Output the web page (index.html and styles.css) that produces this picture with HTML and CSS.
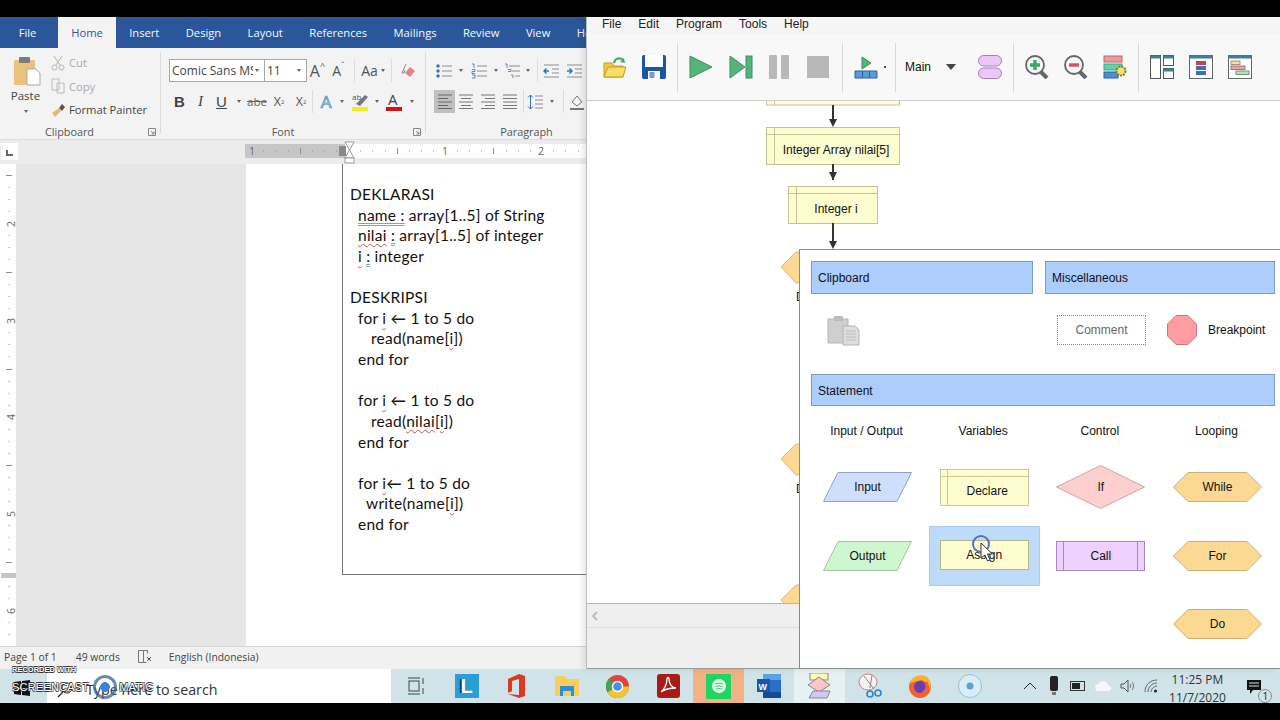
FILE: index.html
```html
<!DOCTYPE html>
<html lang="en">
<head>
<meta charset="utf-8">
<title>Word and Flowgorithm</title>
<link rel="stylesheet" href="styles.css">
</head>
<body>
<div class="screen">
  <div class="desktop">
    <section class="word">
      <nav class="tabs">
        <span class="tab tab-file">File</span>
        <span class="tab tab-active">Home</span>
        <span class="tab">Insert</span>
        <span class="tab">Design</span>
        <span class="tab">Layout</span>
        <span class="tab">References</span>
        <span class="tab">Mailings</span>
        <span class="tab">Review</span>
        <span class="tab">View</span>
        <span class="tab">Help</span>
      </nav>
      <div class="ribbon">
        <div class="group group-clip">
          <div class="clip-body">
            <div class="paste">
              <svg class="paste-icon" width="27" height="30" viewBox="0 0 27 30"><rect x="0" y="4" width="21" height="25" rx="1.5" fill="#e7c37d"/><rect x="5" y="1" width="11" height="6" rx="1" fill="#7b7b7b"/><path d="M13 13h9l4 4v12H13z" fill="#fff" stroke="#a9a9a9"/></svg>
              <span class="paste-label">Paste</span>
              <i class="caret"></i>
            </div>
            <div class="clip-list">
              <div class="clip-item dim"><svg width="14" height="16" viewBox="0 0 14 16"><path d="M3 1l6 9M11 1L5 10" stroke="#b5b5b5" fill="none"/><circle cx="3.5" cy="12.5" r="2.5" fill="none" stroke="#b5b5b5"/><circle cx="10.5" cy="12.5" r="2.5" fill="none" stroke="#b5b5b5"/></svg><span>Cut</span></div>
              <div class="clip-item dim"><svg width="14" height="16" viewBox="0 0 14 16"><path d="M1 1h7v11H1zM6 5h7v10H6z" fill="#f3f3f3" stroke="#bcbcbc"/></svg><span>Copy</span></div>
              <div class="clip-item"><svg width="14" height="16" viewBox="0 0 14 16"><path d="M8 6l-7 5 3 4 6-6z" fill="#e6b877"/><path d="M8 6l3 3 3-4-3-3z" fill="#555"/></svg><span>Format Painter</span></div>
            </div>
          </div>
          <div class="glabel"><span class="glabel-text glabel-clip">Clipboard</span><svg class="launcher" width="8" height="8" viewBox="0 0 8 8"><path d="M.5 7.500v-7h7v7zM3 3l3 3M6 3.500V6H3.500" fill="none" stroke="#888"/></svg></div>
        </div>
        <i class="rsep"></i>
        <div class="group group-font">
          <div class="rrow">
            <div class="selectbox font-name"><span class="font-name-text">Comic Sans MS</span><i class="caret"></i></div>
            <div class="selectbox font-size"><span>11</span><i class="caret"></i></div>
            <span class="tool w21 big">A<sup>^</sup></span>
            <span class="tool w21 mid">A<sup>ˇ</sup></span>
            <i class="vline ml5"></i>
            <span class="tool w36 aa">Aa<i class="caret"></i></span>
            <i class="vline"></i>
            <span class="tool w32"><svg width="14" height="16" viewBox="0 0 14 16"><path d="M5 1L1 10h2l1-3" fill="none" stroke="#8a8a8a"/><path d="M4 10l5-6 5 4-5 6z" fill="#ea7f8b"/></svg></span>
          </div>
          <div class="rrow">
            <span class="tool w21 fmt b">B</span>
            <span class="tool w21 fmt it">I</span>
            <span class="tool w21 fmt un">U</span>
            <span class="tool w14"><i class="caret"></i></span>
            <span class="tool w22 strike">abe</span>
            <span class="tool w22 sc">X<sub>2</sub></span>
            <span class="tool w22 sc">X<sup>2</sup></span>
            <i class="vline"></i>
            <span class="tool w26 glow">A</span>
            <span class="tool w6"><i class="caret"></i></span>
            <span class="tool w30"><svg width="17" height="20" viewBox="0 0 17 20"><path d="M4 12L13 3l3 2-8 9z" fill="#777"/><text x="0" y="8" class="mini">ab</text><rect y="15" width="16" height="4" fill="#f5ee1f"/></svg></span>
            <span class="tool w4"><i class="caret"></i></span>
            <span class="tool w30"><svg width="17" height="20" viewBox="0 0 17 20"><text x="2" y="13" class="mini-a">A</text><rect y="15" width="16" height="4" fill="#d01414"/></svg></span>
            <span class="tool w6"><i class="caret"></i></span>
          </div>
          <div class="glabel glabel-font"><span class="glabel-text">Font</span><svg class="launcher" width="8" height="8" viewBox="0 0 8 8"><path d="M.5 7.500v-7h7v7zM3 3l3 3M6 3.500V6H3.500" fill="none" stroke="#888"/></svg></div>
        </div>
        <i class="rsep"></i>
        <div class="group group-para">
          <div class="rrow">
            <span class="tool w20"><svg width="16" height="16" viewBox="0 0 16 16"><path d="M6 3h10M6 8h10M6 13h10" stroke="#8c8c8c"/><circle cx="2" cy="3" r="1.700" fill="#3f6fb0"/><circle cx="2" cy="8" r="1.700" fill="#3f6fb0"/><circle cx="2" cy="13" r="1.700" fill="#3f6fb0"/></svg></span>
            <span class="tool w14"><i class="caret"></i></span>
            <span class="tool w22"><svg width="16" height="16" viewBox="0 0 16 16"><path d="M6 3h10M6 8h10M6 13h10" stroke="#8c8c8c"/><path d="M1 1h2v4M1 6.500h3v2H1v2h3M1 12h3v3H1" fill="none" stroke="#3f6fb0" stroke-width=".8"/></svg></span>
            <span class="tool w12"><i class="caret"></i></span>
            <span class="tool w20"><svg width="16" height="16" viewBox="0 0 16 16"><path d="M5 3h11M8 8h8M11 13h5" stroke="#8c8c8c"/><path d="M1 1h2v4M4 6.500h3v2H4M7 12h2v3" fill="none" stroke="#3f6fb0" stroke-width=".8"/></svg></span>
            <span class="tool w12"><i class="caret"></i></span>
            <i class="vline ml3"></i>
            <span class="tool w26"><svg width="16" height="14" viewBox="0 0 16 14"><path d="M1 1h15M9 5h7M9 9h7M1 13h15" stroke="#8c8c8c"/><path d="M6 7H1m2.500-2.500L1 7l2.500 2.500" fill="none" stroke="#2f76bd" stroke-width="1.500"/></svg></span>
            <span class="tool w20"><svg width="16" height="14" viewBox="0 0 16 14"><path d="M1 1h15M9 5h7M9 9h7M1 13h15" stroke="#8c8c8c"/><path d="M1 7h5M3.500 4.500L6 7 3.500 9.500" fill="none" stroke="#2f76bd" stroke-width="1.500"/></svg></span>
          </div>
          <div class="rrow">
            <span class="tool w21 tool-on"><svg width="14" height="15" viewBox="0 0 14 15"><path d="M0 1h14M0 4.500h10M0 8h14M0 11.500h10M0 14.500h14" stroke="#666"/></svg></span>
            <span class="tool w22"><svg width="14" height="15" viewBox="0 0 14 15"><path d="M0 1h14M2 4.500h10M0 8h14M2 11.500h10M0 14.500h14" stroke="#777"/></svg></span>
            <span class="tool w22"><svg width="14" height="15" viewBox="0 0 14 15"><path d="M0 1h14M4 4.500h10M0 8h14M4 11.500h10M0 14.500h14" stroke="#777"/></svg></span>
            <span class="tool w21"><svg width="14" height="15" viewBox="0 0 14 15"><path d="M0 1h14M0 4.500h14M0 8h14M0 11.500h14M0 14.500h14" stroke="#777"/></svg></span>
            <i class="vline ml3"></i>
            <span class="tool w22"><svg width="16" height="16" viewBox="0 0 16 16"><path d="M8 2h8M8 6h8M8 10h8M8 14h8" stroke="#8c8c8c"/><path d="M3.500 1v14M1 3.500L3.500 1 6 3.500M1 12.500L3.500 15 6 12.500" fill="none" stroke="#2f76bd"/></svg></span>
            <span class="tool w12"><i class="caret"></i></span>
            <i class="vline ml5"></i>
            <span class="tool w26"><svg width="16" height="16" viewBox="0 0 16 16"><path d="M3 8l5-6 5 6-5 4z" fill="#f4f4f4" stroke="#777"/><path d="M1 15h14" stroke="#777" stroke-width="2"/></svg></span>
          </div>
          <div class="glabel"><span class="glabel-text">Paragraph</span></div>
        </div>
      </div>
      <div class="workspace">
        <div class="ruler-row">
          <div class="corner"><i class="corner-mark"></i></div>
          <svg class="hruler" width="342" height="24" viewBox="244 140 342 24">
            <rect x="245" y="144" width="100" height="14" fill="#c6c6c6"/>
            <rect x="345" y="144" width="241" height="14" fill="#fff"/>
            <path class="ticks" d="M263 151h1M275 151h1M288 151h1M312 151h1M324 151h1M336 151h1M360 151h1M372 151h1M385 151h1M409 151h1M421 151h1M433 151h1M457 151h1M469 151h1M481 151h1M506 151h1M518 151h1M530 151h1M553 151h1M565 151h1M578 151h1"/>
            <path class="ticks" d="M300.500 148v6M397.500 148v6M493.500 148v6"/>
            <text class="rnum" x="249" y="155">1</text>
            <text class="rnum" x="442" y="155">1</text>
            <text class="rnum" x="538" y="155">2</text>
            <rect x="339" y="146" width="7" height="10" fill="#8a8a8a"/>
            <path d="M345 142h9l-4.500 8zM345 158l4.500-8 4.500 8z" fill="#fff" stroke="#9a9a9a"/>
            <rect x="345" y="158" width="9" height="5" fill="#fff" stroke="#9a9a9a"/>
          </svg>
        </div>
        <div class="doc-row">
          <svg class="vruler" width="16" height="482" viewBox="0 164 16 482">
            <path class="ticks" d="M9 187v1M9 199v1M9 211v1M9 235v1M9 247v1M9 259v1M9 284v1M9 296v1M9 308v1M9 332v1M9 344v1M9 356v1M9 381v1M9 393v1M9 405v1M9 429v1M9 441v1M9 453v1M9 477v1M9 489v1M9 501v1M9 525v1M9 537v1M9 549v1M9 586v1M9 598v1M9 622v1M9 634v1"/>
            <path class="ticks" d="M6 175.500h6M6 272.500h6M6 369.500h6M6 465.500h6M6 562.500h6"/>
            <rect x="1" y="573" width="15" height="5" fill="#c6c6c6"/>
            <text class="rnum" transform="rotate(-90 12 223)" x="8" y="226">2</text>
            <text class="rnum" transform="rotate(-90 12 320)" x="8" y="323">3</text>
            <text class="rnum" transform="rotate(-90 12 416)" x="8" y="419">4</text>
            <text class="rnum" transform="rotate(-90 12 513)" x="8" y="516">5</text>
            <text class="rnum" transform="rotate(-90 12 610)" x="8" y="613">6</text>
          </svg>
          <div class="gutter"></div>
          <div class="page">
            <div class="textbox">
              <p>DEKLARASI</p>
              <p class="i1"><span class="gr">name :</span> array[1..5] of String</p>
              <p class="i1"><span class="sp">nilai</span> <span class="gr">:</span> array[1..5] of integer</p>
              <p class="i1"><span class="sp">i</span> <span class="gr">:</span> integer</p>
              <p>&nbsp;</p>
              <p>DESKRIPSI</p>
              <p class="i1">for <span class="sp">i</span> ← 1 to 5 do</p>
              <p class="i2">read(name[<span class="sp">i</span>])</p>
              <p class="i1">end for</p>
              <p>&nbsp;</p>
              <p class="i1">for <span class="sp">i</span> ← 1 to 5 do</p>
              <p class="i2">read(<span class="sp">nilai</span>[<span class="sp">i</span>])</p>
              <p class="i1">end for</p>
              <p>&nbsp;</p>
              <p class="i1">for <span class="sp">i</span>← 1 to 5 do</p>
              <p class="i3">write(name[<span class="sp">i</span>])</p>
              <p class="i1">end for</p>
            </div>
          </div>
        </div>
      </div>
      <footer class="status">
        <span class="st-page">Page 1 of 1</span>
        <span class="st-words">49 words</span>
        <svg class="st-icon" width="14" height="14" viewBox="0 0 14 14"><path d="M.5.5h5v12h-5zM5.500.5h4v3M5.500 12.500h3" fill="none" stroke="#777"/><path d="M9 7l4 4M13 7l-4 4" stroke="#555"/></svg>
        <span class="st-lang">English (Indonesia)</span>
      </footer>
    </section>

    <section class="flow">
      <nav class="menu">
        <span>File</span><span>Edit</span><span>Program</span><span>Tools</span><span>Help</span>
      </nav>
      <div class="toolbar">
        <svg class="ti" width="24" height="24" viewBox="0 0 24 24"><path d="M1 8h8l2 3h9v11H1z" fill="#f5c93f" stroke="#c79c1e"/><path d="M1 22l4-10h18l-3 10z" fill="#fbdc68" stroke="#c79c1e"/><path d="M11 8c1-5 6-6 9-3" fill="none" stroke="#4aa76b" stroke-width="2.200"/><path d="M22 8l-5-1 4-4z" fill="#4aa76b"/></svg>
        <svg class="ti ml15" width="24" height="24" viewBox="0 0 24 24"><path d="M2 0h20a2 2 0 012 2v20a2 2 0 01-2 2H2a2 2 0 01-2-2V2a2 2 0 012-2z" fill="#1d55a3"/><rect x="3" y="0" width="18" height="12" fill="#fff"/><rect x="6" y="16" width="12" height="8" fill="#fff"/><rect x="7.500" y="17" width="5" height="6" fill="#7c9ac5"/></svg>
        <i class="sep"></i>
        <svg class="ti" width="24" height="24" viewBox="0 0 24 24"><path d="M1 1l22 11L1 23z" fill="#55b47c" stroke="#3f8f60"/></svg>
        <svg class="ti ml16" width="24" height="24" viewBox="0 0 24 24"><path d="M1 1l15 11L1 23z" fill="#55b47c" stroke="#3f8f60"/><rect x="17" y="1" width="6" height="22" fill="#55b47c" stroke="#3f8f60"/></svg>
        <svg class="ti ml16" width="24" height="24" viewBox="0 0 24 24"><rect x="0" y="0" width="8" height="24" rx="1" fill="#b8b8b8"/><rect x="12" y="0" width="8" height="24" rx="1" fill="#b8b8b8"/></svg>
        <svg class="ti ml13" width="24" height="24" viewBox="0 0 24 24"><rect x="1" y="1" width="22" height="22" fill="#b8b8b8"/></svg>
        <i class="sep sep-tight"></i>
        <svg class="ti" width="24" height="24" viewBox="0 0 24 24"><path d="M8 2l9 6-9 6z" fill="#55b47c" stroke="#3f8f60"/><path d="M1 16h22v7H1z" fill="#5b9bd8" stroke="#2c639b"/><path d="M8.500 16v7M15.500 16v7" stroke="#2c639b"/></svg>
        <i class="dot"></i>
        <i class="sep sep-main"></i>
        <span class="main-label">Main</span>
        <i class="main-tri"></i>
        <svg class="ti ml22" width="24" height="24" viewBox="0 0 24 24"><rect x=".5" y=".5" width="23" height="10.500" rx="5.200" fill="#ecc6f7" stroke="#a382af"/><rect x=".5" y="13" width="23" height="10.500" rx="5.200" fill="#ecc6f7" stroke="#a382af"/></svg>
        <i class="sep"></i>
        <svg class="ti" width="24" height="24" viewBox="0 0 24 24"><path d="M15 16l7 7" stroke="#666" stroke-width="4"/><circle cx="10" cy="10" r="9" fill="#f7f7f7" stroke="#666" stroke-width="1.800"/><path d="M10 5v10M5 10h10" stroke="#3fa66a" stroke-width="3.400"/></svg>
        <svg class="ti ml15" width="24" height="24" viewBox="0 0 24 24"><path d="M15 16l7 7" stroke="#666" stroke-width="4"/><circle cx="10" cy="10" r="9" fill="#f7f7f7" stroke="#666" stroke-width="1.800"/><path d="M5 10h10" stroke="#d8505a" stroke-width="3.400"/></svg>
        <svg class="ti ml15" width="24" height="24" viewBox="0 0 24 24"><rect x="1" y="1" width="18" height="6" fill="#ec9a9e" stroke="#b66"/><rect x="1" y="9" width="18" height="6" fill="#66d49a" stroke="#3a9"/><rect x="1" y="17" width="14" height="6" fill="#4a90d8" stroke="#2c639b"/><circle cx="18" cy="16" r="4.500" fill="#f5e07a" stroke="#8a7a30" stroke-width="2" stroke-dasharray="2 1"/></svg>
        <i class="sep"></i>
        <svg class="ti" width="24" height="24" viewBox="0 0 24 24"><rect x=".5" y=".5" width="10" height="23" fill="#fff" stroke="#555"/><rect x=".5" y=".5" width="10" height="3" fill="#3d7f9c"/><rect x="13.500" y=".5" width="10" height="10" fill="#fff" stroke="#555"/><rect x="13.500" y="13.500" width="10" height="10" fill="#fff" stroke="#555"/><rect x="13.500" y=".5" width="10" height="3" fill="#3d7f9c"/><rect x="13.500" y="13.500" width="10" height="3" fill="#3d7f9c"/></svg>
        <svg class="ti ml15" width="24" height="24" viewBox="0 0 24 24"><rect x=".5" y=".5" width="23" height="23" fill="#fff" stroke="#666"/><rect x=".5" y=".5" width="23" height="3" fill="#3d7f9c"/><rect x="7" y="6" width="10" height="4" fill="#c8404c"/><rect x="7" y="11" width="10" height="4" fill="#3a6fb8"/><rect x="7" y="16" width="10" height="4" fill="#3a6fb8"/></svg>
        <svg class="ti ml15" width="24" height="24" viewBox="0 0 24 24"><rect x=".5" y=".5" width="23" height="23" fill="#fff" stroke="#666"/><rect x=".5" y=".5" width="23" height="3" fill="#3d7f9c"/><rect x="3" y="6" width="9" height="3.500" fill="#f3e48a" stroke="#998"/><rect x="3" y="11" width="14" height="3.500" fill="#ef9ea5" stroke="#a77"/><rect x="8" y="16" width="13" height="3.500" fill="#a8e6b8" stroke="#797"/></svg>
      </div>
      <div class="canvas">
        <svg class="chart" width="693" height="502" viewBox="587 101 693 502">
          <g class="decl">
            <rect x="766.500" y="90" width="133" height="15"/>
            <path d="M774.500 90v15"/>
            <rect x="766.500" y="127.500" width="133" height="37"/>
            <path d="M774.500 127.500v37M766.500 134.500h133"/>
            <rect x="788.500" y="186.500" width="89" height="37"/>
            <path d="M796.500 186.500v37M788.500 193.500h89"/>
          </g>
          <text class="ntext" x="836" y="154" text-anchor="middle">Integer Array nilai[5]</text>
          <text class="ntext" x="836" y="213" text-anchor="middle">Integer i</text>
          <path class="flowline" d="M833 105v16M833 164v16M833 223v23"/>
          <path class="arrowhead" d="M829 119h8l-4 8zM829 172h8l-4 8zM829 241h8l-4 8z"/>
          <path class="hex" d="M800 252h-4l-15 15 15 16h4zM800 444h-4l-15 15 15 16h4zM800 585h-4l-15 15 15 16h4z"/>
          <text class="ntext" x="796" y="301">D</text>
          <text class="ntext" x="796" y="493">D</text>
        </svg>
      </div>
      <div class="hscroll"><svg width="8" height="10" viewBox="0 0 8 10"><path d="M6 1L2 5l4 4" fill="none" stroke="#bbb" stroke-width="1.800"/></svg></div>
      <div class="flow-foot"></div>

      <aside class="palette">
        <div class="pal-top">
          <div class="pal-col pal-col-a">
            <h3 class="pal-head">Clipboard</h3>
            <div class="pal-items">
              <svg class="pal-clip" width="33" height="31" viewBox="0 0 33 31"><path d="M1 4h20v24H1z" fill="#cfcfcf" stroke="#b5b5b5"/><rect x="7" y="1" width="9" height="5" fill="#bbb"/><path d="M16 11h12l4 4v15H16z" fill="#ddd" stroke="#b5b5b5"/><path d="M19 16h10M19 19h10M19 22h10M19 25h10" stroke="#bdbdbd"/></svg>
            </div>
          </div>
          <div class="pal-col pal-col-b">
            <h3 class="pal-head">Miscellaneous</h3>
            <div class="pal-items">
              <span class="comment">Comment</span>
              <svg class="octagon" width="30" height="30" viewBox="0 0 30 30"><path d="M9 .5h12L29.500 9v12L21 29.500H9L.5 21V9z" fill="#fd9da2" stroke="#c97b80"/></svg>
              <span class="bp-label">Breakpoint</span>
            </div>
          </div>
        </div>
        <h3 class="pal-head pal-head-wide">Statement</h3>
        <div class="pal-titles">
          <span>Input / Output</span><span>Variables</span><span>Control</span><span>Looping</span>
        </div>
        <div class="pal-grid">
          <div class="cell"><div class="shape"><svg width="89" height="30" viewBox="0 0 89 30"><path d="M15 .5h73.500L74 29.500H.5z" fill="#cfdffb" stroke="#8ea3c8"/></svg><span>Input</span></div></div>
          <div class="cell"><div class="shape shape-decl"><svg width="89" height="37" viewBox="0 0 89 37"><rect x=".5" y=".5" width="88" height="36" fill="#fdfdcf" stroke="#c9c99a"/><path d="M7.500 .5v36M.5 7.500h88" stroke="#c9c99a" fill="none"/></svg><span>Declare</span></div></div>
          <div class="cell"><div class="shape"><svg width="89" height="44" viewBox="0 0 89 44"><path d="M44.500 .5l44 21.500-44 21.500L.5 22z" fill="#fdcfcf" stroke="#cfa5a5"/></svg><span>If</span></div></div>
          <div class="cell"><div class="shape"><svg width="89" height="30" viewBox="0 0 89 30"><path d="M15 .5h59L88.500 15 74 29.500H15L.5 15z" fill="#fbd993" stroke="#cdb078"/></svg><span>While</span></div></div>

          <div class="cell"><div class="shape"><svg width="89" height="30" viewBox="0 0 89 30"><path d="M15 .5h73.500L74 29.500H.5z" fill="#cff7cf" stroke="#9ec89e"/></svg><span>Output</span></div></div>
          <div class="cell"><div class="selected"><div class="shape"><svg width="89" height="30" viewBox="0 0 89 30"><rect x=".5" y=".5" width="88" height="29" fill="#fdfdcf" stroke="#b5b58a"/></svg><span>Assign</span></div>
            <svg class="pointer" width="28" height="34" viewBox="0 0 28 34"><circle cx="12" cy="11" r="8" fill="none" stroke="#5b6bd0" stroke-width="2"/><path d="M12 10v15l4-3 2.500 6 2.500-1-2.500-6h5z" fill="#fff" stroke="#333"/></svg>
          </div></div>
          <div class="cell"><div class="shape"><svg width="89" height="30" viewBox="0 0 89 30"><rect x=".5" y=".5" width="88" height="29" fill="#efcffd" stroke="#a58bb5"/><path d="M7.500 .5v29M81.500 .5v29" stroke="#a58bb5" fill="none"/></svg><span>Call</span></div></div>
          <div class="cell"><div class="shape"><svg width="89" height="30" viewBox="0 0 89 30"><path d="M15 .5h59L88.500 15 74 29.500H15L.5 15z" fill="#fbd993" stroke="#cdb078"/></svg><span>For</span></div></div>

          <div class="cell"></div><div class="cell"></div><div class="cell"></div>
          <div class="cell"><div class="shape"><svg width="89" height="30" viewBox="0 0 89 30"><path d="M15 .5h59L88.500 15 74 29.500H15L.5 15z" fill="#fbd993" stroke="#cdb078"/></svg><span>Do</span></div></div>
        </div>
      </aside>
    </section>
  </div>

  <div class="taskbar">
    <svg class="win" width="16" height="16" viewBox="0 0 16 16"><path d="M0 2l7-1v7H0zM8 1l8-1v8H8zM0 9h7v6l-7-1zM8 9h8v7l-8-1z" fill="#111"/></svg>
    <div class="search">
      <svg width="16" height="16" viewBox="0 0 16 16"><circle cx="10" cy="6" r="5" fill="none" stroke="#222"/><path d="M6 10l-5 5" stroke="#222" stroke-width="1.300"/></svg>
      <span>Type here to search</span>
    </div>
    <div class="slot"><svg width="18" height="18" viewBox="0 0 18 18"><rect x="2" y="4" width="10" height="10" fill="none" stroke="#444"/><path d="M1 1h12M1 17h12M16 1v6M16 11v6" stroke="#444"/></svg></div>
    <div class="slot"><div class="app-l">L</div></div>
    <div class="slot"><svg width="19" height="24" viewBox="0 0 19 24"><path d="M1 5l11-5 6 2v20l-6 2-11-4 11 1V5l-7 2v10l-4 2z" fill="#d83b20"/></svg></div>
    <div class="slot"><svg width="24" height="20" viewBox="0 0 24 20"><path d="M0 0h10l2 3h12v17H0z" fill="#f6cf5c"/><path d="M5 10h14v10h-3v-5H8v5H5z" fill="#2f8fd8"/></svg></div>
    <div class="slot"><svg width="23" height="23" viewBox="0 0 24 24"><circle cx="12" cy="12" r="12" fill="#e0463a"/><path d="M12 12L1.600 18A12 12 0 013 4z" fill="#3da55a"/><path d="M12 12h12a12 12 0 01-12 12 12 12 0 01-10.400-6z" fill="#f5c52e"/><circle cx="12" cy="12" r="6" fill="#fff"/><circle cx="12" cy="12" r="4.500" fill="#4a8ff0"/></svg></div>
    <div class="slot"><svg width="23" height="24" viewBox="0 0 23 24"><rect width="23" height="24" rx="3" fill="#a81c14"/><path d="M4 18c3-2 6-8 6-13 0-2 2-2 2 0 0 5 3 9 7 9-5 0-11 1-15 4z" fill="none" stroke="#fff" stroke-width="1.300"/></svg></div>
    <div class="slot slot-orange"><div class="app-sp"><svg width="14" height="14" viewBox="0 0 14 14"><circle cx="7" cy="7" r="7" fill="#e8f8ee"/><path d="M3 5c3-1 5-1 8 0M3.500 7.500c2.500-.7 4.500-.7 7 0M4 10c2-.5 4-.5 6 0" stroke="#1ed760" fill="none"/></svg></div></div>
    <div class="slot"><svg width="24" height="24" viewBox="0 0 24 24"><rect x="6" width="18" height="24" rx="1" fill="#2b6ec4"/><rect x="6" width="18" height="6" fill="#55a5e8"/><rect x="6" y="18" width="18" height="6" fill="#134a9a"/><rect y="5" width="13" height="13" fill="#1d56a8"/><text class="app-w" x="1.500" y="15.500">W</text></svg></div>
    <div class="slot slot-light"><svg width="24" height="26" viewBox="0 0 24 26"><rect x="3" y="0" width="18" height="7" fill="#fdfdb0" stroke="#888"/><path d="M12 4l11 8-11 7L1 12z" fill="#fdc5c5" stroke="#888"/><path d="M6 18h17l-3 7H2z" fill="#d6c6f5" stroke="#888"/></svg></div>
    <div class="slot"><svg width="24" height="26" viewBox="0 0 24 26"><ellipse cx="10" cy="9" rx="9" ry="8" fill="#f4f4f4" stroke="#d87a80"/><path d="M6 3l10 13M14 2L12 15" stroke="#888"/><circle cx="12" cy="21" r="3" fill="none" stroke="#2a86c8" stroke-width="1.600"/><circle cx="20" cy="20" r="3" fill="none" stroke="#2a86c8" stroke-width="1.600"/></svg></div>
    <div class="slot"><svg width="24" height="24" viewBox="0 0 24 24"><circle cx="12" cy="13" r="11" fill="#f2622e"/><path d="M2 9C4 2 13-1 19 3c3 2 5 8 3 13-1-5-4-9-9-10z" fill="#fbb02e"/><circle cx="12" cy="13" r="6" fill="#6a3bb8"/><path d="M18 8c2 4 1 9-3 11" fill="none" stroke="#f2622e" stroke-width="3"/></svg></div>
    <div class="slot"><svg width="24" height="24" viewBox="0 0 24 24"><circle cx="12" cy="12" r="11.500" fill="#d9eef7" stroke="#8fc0dc"/><circle cx="12" cy="12" r="3.500" fill="#58a4dc"/></svg></div>
    <div class="tray">
      <span class="tray-i"><svg width="14" height="8" viewBox="0 0 14 8"><path d="M1 7l6-6 6 6" fill="none" stroke="#222"/></svg></span>
      <span class="tray-i"><svg width="10" height="20" viewBox="0 0 10 20"><rect x="1" y="0" width="8" height="15" rx="2" fill="#222"/><rect x="3" y="16" width="4" height="3" fill="#777"/></svg></span>
      <span class="tray-i"><svg width="16" height="10" viewBox="0 0 16 10"><rect x=".5" y=".5" width="14" height="9" fill="none" stroke="#333"/><rect x="2" y="2" width="8" height="6" fill="#222"/></svg></span>
      <span class="tray-i"><svg width="16" height="12" viewBox="0 0 16 12"><path d="M4 11a3.500 3.500 0 01-.5-7 5 5 0 019.500 1 3 3 0 010 6z" fill="#f4f8f8"/></svg></span>
      <span class="tray-i"><svg width="15" height="14" viewBox="0 0 15 14"><path d="M1 5h3l4-4v12L4 9H1z" fill="none" stroke="#555"/><path d="M10 5c1 1 1 3 0 4M12 3c2 2 2 6 0 8" fill="none" stroke="#777"/></svg></span>
      <span class="tray-i"><svg width="14" height="14" viewBox="0 0 14 14"><path d="M1 13C1 6 6 1 13 1M4 13c0-5 4-9 9-9M7 13c0-3 3-6 6-6" fill="none" stroke="#666"/><circle cx="11.500" cy="12" r="1.500" fill="#222"/></svg></span>
    </div>
    <div class="clock"><span>11:25 PM</span><span>11/7/2020</span></div>
    <div class="notif">
      <svg width="14" height="14" viewBox="0 0 14 14"><path d="M0 0h14v10H6l-3 4v-4H0z" fill="#111"/><path d="M2 3h10M2 6h10" stroke="#cfe3e8"/></svg>
      <span class="notif-badge">1</span>
    </div>
  </div>
  <div class="watermark">
    <span class="wm-small">RECORDED WITH</span>
    <div class="wm-line">
      <span>SCREENCAST</span>
      <i class="wm-logo"></i>
      <span class="wm-matic">MATIC</span>
    </div>
  </div>
</div>
</body>
</html>
```

FILE: styles.css
```css
* { box-sizing: border-box; }
html, body { margin: 0; padding: 0; }
body { width: 1280px; height: 720px; overflow: hidden; background: #000; font-family: "Open Sans", "Noto Sans", sans-serif; }
svg { display: block; flex: none; }
i { font-style: normal; }

.screen { position: relative; width: 1280px; height: 720px; padding-top: 17px; background: #000; display: flex; flex-direction: column; }
.desktop { display: flex; height: 652px; }

/* ---- Word ---- */
.word { width: 586px; flex: none; display: flex; flex-direction: column; overflow: hidden; background: #f3f3f3; }
.tabs { height: 31px; flex: none; display: flex; background: #2b579a; color: #f4f6fa; font-size: 11.200px; align-items: stretch; }
.tab { padding: 0 13.200px; line-height: 31px; white-space: nowrap; flex: none; }
.tab-file { width: 58px; padding: 0 3px 0 0; text-align: center; }
.tab-active { background: #f3f3f3; color: #2b579a; width: 58px; padding: 0; text-align: center; }

.ribbon { height: 92px; flex: none; padding-top: 4px; display: flex; align-items: flex-start; border-bottom: 1px solid #dcdcdc; color: #444; font-size: 12px; }
.group { height: 87px; flex: none; display: flex; flex-direction: column; }
.group-clip { width: 160px; }
.group-font { width: 264px; padding: 7px 0 0 8px; }
.group-para { width: 201px; padding: 7px 0 0 8px; }
.rsep { width: 1px; height: 81px; background: #dadada; flex: none; }
.glabel { margin-top: auto; display: grid; grid-template-columns: 1fr auto; align-items: center; height: 14px; font-size: 10.800px; color: #555; line-height: 14px; }
.glabel-text { text-align: center; }
.glabel-clip { padding-right: 5px; }
.group-font .glabel { margin-left: -8px; }
.group-para .glabel { margin-left: -8px; }
.glabel-font .glabel-text { padding-right: 4px; }
.launcher { margin: 0 4px 0 4px; }

.clip-body { display: flex; flex: 1; }
.paste { width: 51px; display: flex; flex-direction: column; align-items: center; }
.paste-icon { margin: 4px 0 0 4px; }
.paste-label { font-size: 11.500px; line-height: 16px; margin-top: 2px; }
.paste .caret { margin-top: 6px; }
.clip-list { display: flex; flex-direction: column; margin-top: -1px; }
.clip-item { height: 23.500px; display: flex; align-items: center; gap: 4px; font-size: 11.200px; white-space: nowrap; }
.dim { color: #aaa; }

.caret { display: inline-block; width: 0; height: 0; border: 2.500px solid transparent; border-top: 3px solid #666; border-bottom: 0; flex: none; }
.rrow { display: flex; align-items: center; height: 23px; margin-bottom: 8px; flex: none; }
.selectbox { height: 23px; background: #fff; border: 1px solid #a8a8a8; display: flex; align-items: center; justify-content: space-between; font-size: 12px; color: #444; flex: none; padding: 0 5px 0 2px; }
.font-name { width: 96px; }
.font-name-text { width: 81px; overflow: hidden; white-space: nowrap; }
.font-size { width: 43px; margin-left: -1px; }
.tool { height: 23px; display: flex; align-items: center; justify-content: center; flex: none; color: #555; }
.w4 { width: 4px; } .w6 { width: 6px; } .w12 { width: 12px; } .w14 { width: 14px; }
.w20 { width: 20px; } .w21 { width: 21px; } .w22 { width: 22px; } .w26 { width: 26px; }
.w30 { width: 30px; } .w32 { width: 32px; } .w36 { width: 36px; }
.vline { width: 1px; height: 23px; background: #dcdcdc; flex: none; }
.ml3 { margin-left: 3px; } .ml5 { margin-left: 5px; }
.big { font-size: 16px; } .mid { font-size: 14px; }
.big sup, .mid sup { font-size: 9px; line-height: 1; align-self: flex-start; margin-top: 2px; }
.aa { font-size: 14px; gap: 3px; }
.fmt { font-size: 15px; color: #444; font-family: "Liberation Serif", serif; }
.b { font-weight: 700; font-family: "Liberation Sans", sans-serif; }
.it { font-style: italic; }
.un { text-decoration: underline; font-family: "Liberation Sans", sans-serif; }
.strike { font-size: 11.500px; text-decoration: line-through; color: #666; }
.sc { font-size: 12.500px; color: #555; }
.sc sub, .sc sup { font-size: 6px; line-height: 1; }
.glow { font-size: 17px; color: #dbe9f7; -webkit-text-stroke: .7px #4a86c6; }
.mini { font-size: 8px; fill: #555; font-family: "Open Sans", sans-serif; }
.mini-a { font-size: 15px; fill: #444; font-family: "Open Sans", sans-serif; }
.tool-on { background: #c0c0c0; }

.workspace { flex: 1; display: flex; flex-direction: column; min-height: 0; background: #e6e6e6; }
.ruler-row { height: 24px; flex: none; display: flex; background: #ececec; }
.corner { width: 17px; height: 17px; margin: 3px 0 0 1px; background: #fff; display: flex; align-items: flex-end; justify-content: center; padding-bottom: 4px; flex: none; }
.corner-mark { width: 7px; height: 6px; border-left: 2px solid #666; border-bottom: 2px solid #666; }
.hruler { margin-left: 226px; }
.ticks { stroke: #8f8f8f; stroke-width: 1; fill: none; }
.rnum { font-size: 10.500px; fill: #666; font-family: "Open Sans", sans-serif; }
.doc-row { flex: 1; display: flex; min-height: 0; }
.vruler { background: #fff; }
.gutter { width: 230px; flex: none; }
.page { flex: 1; background: #fff; padding-left: 96px; }
.textbox { height: 411px; border-left: 1px solid #777; border-bottom: 1px solid #777; padding: 20px 0 0 7px; font-family: "Lato", "Noto Sans", sans-serif; font-size: 15.500px; letter-spacing: .25px; line-height: 20.620px; color: #111; white-space: nowrap; }
.textbox p { margin: 0; }
.i1 { padding-left: 8px; }
.i2 { padding-left: 21px; }
.i3 { padding-left: 16px; }
.sp { text-decoration: underline wavy #c0504d 1px; text-underline-offset: 2px; }
.gr { text-decoration: underline double #7fa3c8 1px; text-underline-offset: 2px; }

.status { height: 23px; flex: none; background: #f1f1f1; border-top: 1px solid #d6d6d6; display: flex; align-items: center; font-size: 10.300px; color: #444; white-space: nowrap; padding: 0 0 3px 4px; }
.st-words { margin-left: 19px; }
.st-icon { margin-left: 18px; }
.st-lang { margin-left: 17px; }

/* ---- Flowgorithm ---- */
.flow { position: relative; flex: 1; min-width: 0; display: flex; flex-direction: column; border-left: 1px solid #bdbdbd; background: #fff; box-shadow: -3px 0 6px rgba(0,0,0,.1); font-family: "Liberation Sans", Arial, sans-serif; font-size: 12px; color: #111; }
.menu { height: 17px; flex: none; display: flex; align-items: center; background: #f5f5f5; padding: 0 0 3px 15px; gap: 17px; color: #222; }
.toolbar { height: 67px; flex: none; display: flex; align-items: center; padding-left: 16px; background: #f8f8f8; border-bottom: 1px solid #cfcfcf; }
.ml13 { margin-left: 13px; } .ml15 { margin-left: 15px; } .ml16 { margin-left: 16px; } .ml22 { margin-left: 22px; }
.sep { width: 1px; height: 49px; background: #d8d8d8; margin: 0 11px; flex: none; }
.sep-tight { margin: 0 11px 0 12px; }
.sep-main { margin: 0 9px 0 9px; }
.dot { width: 2px; height: 2px; background: #444; margin-left: 6px; flex: none; }
.main-label { width: 26px; font-size: 12px; }
.main-tri { width: 0; height: 0; margin-left: 15px; border: 5px solid transparent; border-top: 6px solid #444; border-bottom: 0; flex: none; }
.canvas { height: 502px; flex: none; overflow: hidden; background: #fff; }
.decl rect, .decl path { fill: #fdfdcf; stroke: #c4c49a; }
.decl path { fill: none; }
.ntext { font-size: 12px; fill: #111; font-family: "Liberation Sans", Arial, sans-serif; }
.flowline { stroke: #333; stroke-width: 2; fill: none; }
.arrowhead { fill: #333; }
.hex { fill: #fbd993; stroke: #d8bb82; }
.hscroll { height: 25px; flex: none; background: #efefef; border-top: 1px solid #b5b5b5; border-bottom: 1px solid #dcdcdc; display: flex; align-items: center; padding-left: 4px; }
.flow-foot { flex: 1; background: #efefef; border-bottom: 1px solid #999; }

.palette { position: absolute; left: 212px; top: 232px; width: 481px; height: 420px; background: #fff; border: 1px solid #8a8a8a; border-right: 0; padding: 11px 0 0 11px; }
.pal-top { display: flex; gap: 12px; }
.pal-col-a { width: 222px; }
.pal-col-b { width: 230px; }
.pal-head { margin: 0; height: 33px; line-height: 33px; padding-left: 6px; background: #adcdfd; border: 1px solid #7d9cc6; font-size: 12px; font-weight: 400; color: #111; }
.pal-items { height: 80px; display: flex; align-items: flex-start; padding-top: 21px; }
.pal-clip { margin-left: 16px; }
.pal-col-b .pal-items { padding-left: 12px; }
.comment { width: 89px; height: 30px; border: 1px dotted #888; color: #666; display: flex; align-items: center; justify-content: center; flex: none; }
.octagon { margin-left: 21px; }
.bp-label { margin-left: 11px; line-height: 30px; }
.pal-head-wide { width: 464px; height: 32px; line-height: 32px; }
.pal-titles { display: grid; grid-template-columns: repeat(4, 116.670px); margin-top: 18px; height: 14px; line-height: 14px; }
.pal-titles span { width: 111px; text-align: center; }
.pal-grid { display: grid; grid-template-columns: repeat(4, 116.670px); grid-auto-rows: 68.500px; margin-top: 15px; }
.cell { display: flex; align-items: center; padding-left: 12px; }
.shape { display: grid; place-items: center; flex: none; }
.shape > * { grid-area: 1 / 1; }
.shape-decl span { margin: 7px 0 0 6px; }
.selected { position: relative; flex: none; width: 111px; height: 60px; margin-left: -11px; background: #bedcfa; border: 1px solid #a9cdf0; padding: 13px 10px 0; }
.pointer { position: absolute; left: 39px; top: 6px; }

/* ---- Taskbar ---- */
.taskbar { height: 34px; flex: none; display: flex; background: #cfe3e8; align-items: stretch; }
.win { margin: 11px 0 0 14px; }
.search { width: 344px; margin-left: 17px; background: #fff; display: flex; align-items: center; padding: 7px 0 0 10px; gap: 13px; font-size: 14.300px; color: #333; white-space: nowrap; flex: none; }
.slot { width: 50.400px; flex: none; display: flex; align-items: center; justify-content: center; }
.slot-orange { background: #f4b183; }
.slot-light { background: #e6f1f3; }
.app-l { width: 24px; height: 24px; background: #2a9fd6; color: #fff; font-weight: 700; font-size: 20px; line-height: 24px; text-align: center; font-family: "Liberation Sans", sans-serif; text-shadow: -2px 0 0 #123a78; }
.app-sp { width: 25px; height: 25px; background: #1ed760; display: flex; align-items: center; justify-content: center; }
.app-w { font-size: 9px; font-weight: 700; fill: #fff; font-family: "Liberation Sans", sans-serif; }
.tray { display: flex; margin-left: 22px; }
.tray-i { width: 24.300px; display: flex; align-items: center; justify-content: center; }
.clock { width: 68px; display: flex; flex-direction: column; align-items: center; font-size: 12px; line-height: 18px; color: #333; padding-top: 2px; white-space: nowrap; overflow: hidden; }
.notif { position: relative; flex: 1; display: flex; padding: 11px 0 0 16px; }
.notif-badge { position: absolute; left: 27px; top: 20px; width: 14px; height: 14px; border: 1px solid #888; border-radius: 50%; font-size: 10px; line-height: 12px; text-align: center; color: #222; }

/* ---- Recording watermark ---- */
.watermark { position: absolute; left: 12px; top: 665px; color: #fff; font-family: "Liberation Sans", sans-serif; text-shadow: .6px .6px 0 rgba(30,30,30,.8), -.6px -.6px 0 rgba(30,30,30,.8), .6px -.6px 0 rgba(30,30,30,.8), -.6px .6px 0 rgba(30,30,30,.8); }
.wm-small { display: block; font-size: 7.500px; line-height: 9px; font-weight: 700; }
.wm-line { display: flex; align-items: center; font-size: 11px; line-height: 14px; margin-top: 1px; letter-spacing: .2px; }
.wm-logo { width: 24px; height: 24px; margin: 0 2px 0 4px; border-radius: 50%; border: 3px solid rgba(60,100,150,.75); background: radial-gradient(circle, #3f7fe0 0 36%, transparent 40%); flex: none; }
```
